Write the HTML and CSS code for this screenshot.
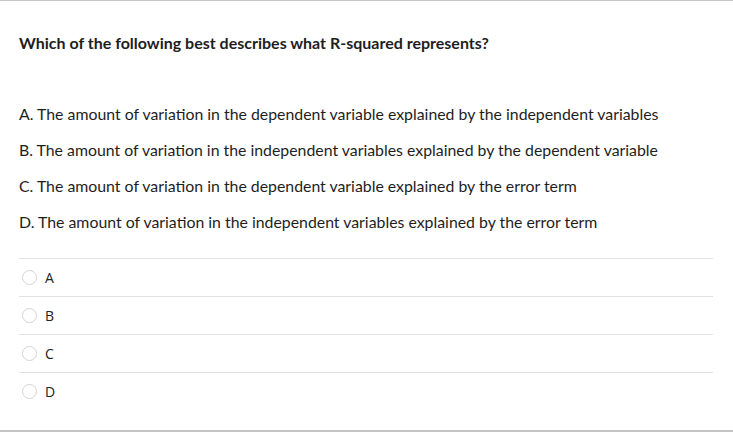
FILE: index.html
```html
<!DOCTYPE html>
<html>
<head>
<meta charset="utf-8">
<link rel="stylesheet" href="styles.css">
</head>
<body>
<div class="page">
  <div class="question">
    <h1 class="title">Which of the following best describes what R-squared represents?</h1>
    <div class="statements">
      <p class="stmt">A. The amount of variation in the dependent variable explained by the independent variables</p>
      <p class="stmt">B. The amount of variation in the independent variables explained by the dependent variable</p>
      <p class="stmt">C. The amount of variation in the dependent variable explained by the error term</p>
      <p class="stmt">D. The amount of variation in the independent variables explained by the error term</p>
    </div>
  </div>
  <div class="choices">
    <label class="choice"><span class="radio"></span><span class="letter">A</span></label>
    <label class="choice"><span class="radio"></span><span class="letter">B</span></label>
    <label class="choice"><span class="radio"></span><span class="letter">C</span></label>
    <label class="choice"><span class="radio"></span><span class="letter">D</span></label>
  </div>
</div>
</body>
</html>
```
FILE: styles.css
```css
html, body {
  margin: 0;
  padding: 0;
  background: #fff;
}
.page {
  width: 733px;
  height: 432px;
  box-sizing: border-box;
  border-top: 1px solid #c8c8c8;
  border-bottom: 2px solid #c4c4c4;
  display: flex;
  flex-direction: column;
  font-family: Lato, "Open Sans", sans-serif;
  color: #1e1e1e;
}
.question {
  padding: 0 19px;
}
.title {
  margin: 32px 0 0;
  font-size: 16px;
  font-weight: 700;
  line-height: 20px;
}
.statements {
  margin-top: 51px;
  display: flex;
  flex-direction: column;
  gap: 16px;
}
.stmt {
  margin: 0;
  font-size: 15.85px;
  line-height: 20px;
}
.choices {
  margin: 26px 20px 0 19px;
  display: flex;
  flex-direction: column;
}
.choice {
  display: flex;
  align-items: center;
  gap: 8px;
  height: 37px;
  border-top: 1px solid #e2e2e2;
  padding-left: 3px;
  font-family: "Open Sans", sans-serif;
  font-size: 14px;
  color: #222;
}
.radio {
  width: 13px;
  height: 13px;
  border: 1px solid #d4d4d4;
  border-radius: 50%;
  box-sizing: content-box;
}
```
